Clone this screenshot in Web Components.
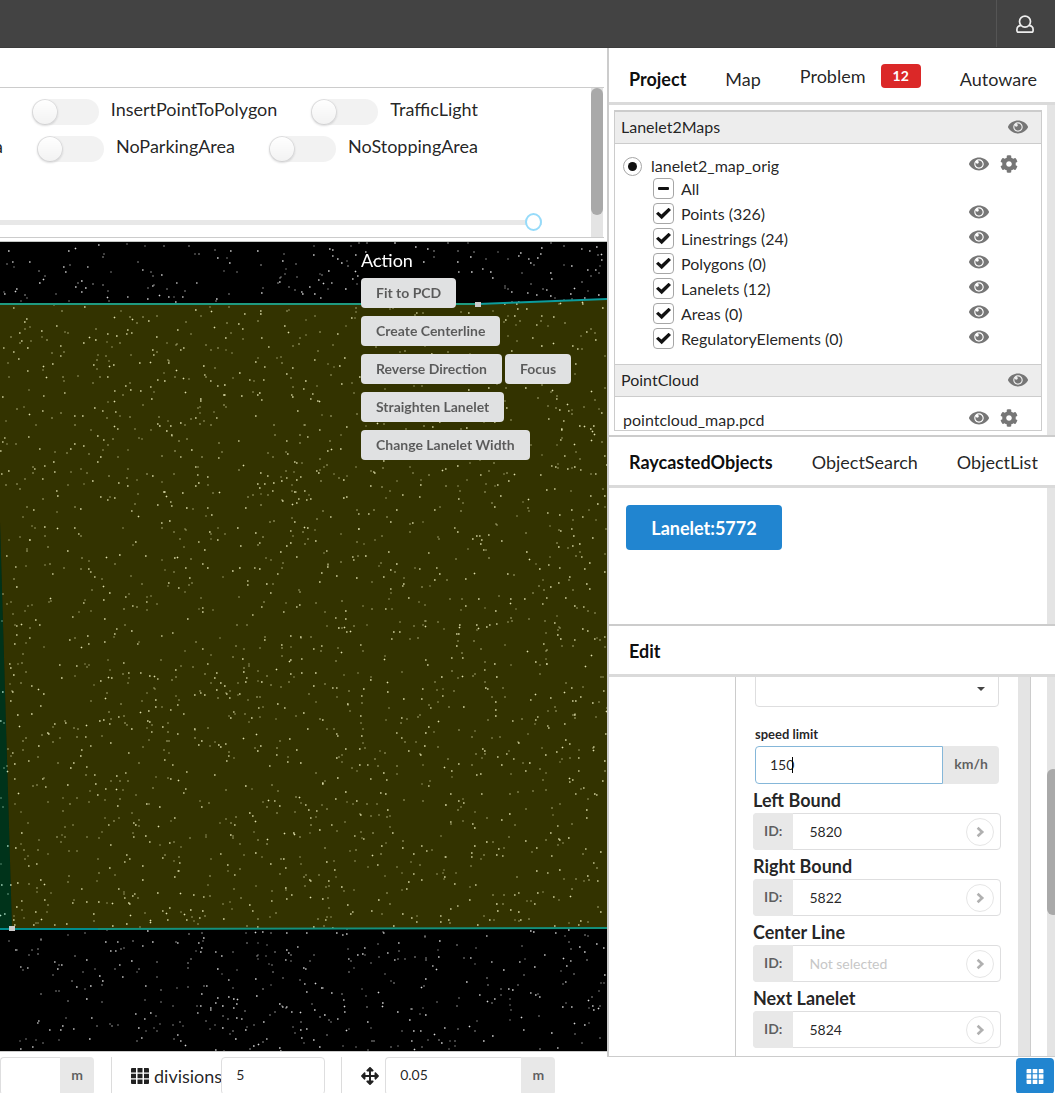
<!DOCTYPE html>
<html lang="en">
<head>
<meta charset="utf-8">
<title>Map Editor</title>
<style>
html,body{margin:0;height:100%}
body{font-family:Lato,"Liberation Sans",sans-serif;font-size:16px;color:rgba(0,0,0,.87);background:#fff;overflow:hidden}
</style>
</head>
<body>
<map-editor></map-editor>
<script>
const ICONS = {
  eye: ['0 0 576 512', '<path d="M569.354 231.631C512.97 135.949 407.81 72 288 72 168.14 72 63.004 135.994 6.646 231.631a47.999 47.999 0 0 0 0 48.739C63.031 376.051 168.19 440 288 440c119.86 0 224.996-63.994 281.354-159.631a47.997 47.997 0 0 0 0-48.738zM288 392c-75.162 0-136-60.827-136-136 0-75.162 60.826-136 136-136 75.162 0 136 60.826 136 136 0 75.162-60.826 136-136 136zm104-136c0 57.438-46.562 104-104 104s-104-46.562-104-104c0-17.708 4.431-34.379 12.236-48.973l-.001.032c0 23.651 19.173 42.823 42.824 42.823s42.824-19.173 42.824-42.823c0-23.651-19.173-42.824-42.824-42.824l-.032.001C253.621 156.431 270.292 152 288 152c57.438 0 104 46.562 104 104z"/>'],
  cog: ['0 0 512 512', '<path d="M444.788 291.1l42.616 24.599c4.867 2.809 7.126 8.618 5.459 13.985-11.07 35.642-29.97 67.842-54.689 94.586a12.016 12.016 0 0 1-14.832 2.254l-42.584-24.595a191.577 191.577 0 0 1-60.759 35.13v49.182a12.01 12.01 0 0 1-9.377 11.718c-34.956 7.85-72.499 8.256-109.219.007-5.49-1.233-9.403-6.096-9.403-11.723v-49.184a191.555 191.555 0 0 1-60.759-35.13l-42.584 24.595a12.016 12.016 0 0 1-14.832-2.254c-24.718-26.744-43.619-58.944-54.689-94.586-1.667-5.366.592-11.175 5.459-13.985L67.212 291.1a193.48 193.48 0 0 1 0-70.199l-42.616-24.599c-4.867-2.809-7.126-8.618-5.459-13.985 11.07-35.642 29.97-67.842 54.689-94.586a12.016 12.016 0 0 1 14.832-2.254l42.584 24.595a191.577 191.577 0 0 1 60.759-35.13V25.759a12.01 12.01 0 0 1 9.377-11.718c34.956-7.85 72.499-8.256 109.219-.007 5.49 1.233 9.403 6.096 9.403 11.723v49.184a191.555 191.555 0 0 1 60.759 35.13l42.584-24.595a12.016 12.016 0 0 1 14.832 2.254c24.718 26.744 43.619 58.944 54.689 94.586 1.667 5.366-.592 11.175-5.459 13.985L444.788 220.9a193.485 193.485 0 0 1 0 70.2zM336 256c0-44.112-35.888-80-80-80s-80 35.888-80 80 35.888 80 80 80 80-35.888 80-80z"/>'],
  user: ['0 0 18 18', '<g fill="none" stroke="currentColor" stroke-width="1.7"><circle cx="9" cy="6.6" r="5.5"/><path d="M5 10.4C2.400 10.800 .9 12.300 .9 14.600V15.400Q.9 17.100 2.600 17.100H15.400Q17.100 17.100 17.100 15.400V14.600C17.100 12.300 15.600 10.800 13 10.400"/></g>'],
  grid: ['0 0 18 16', '<path d="M1 0h4v4.600h-5v-3.600q0-1 1-1zM6.500 0h5v4.600h-5zM13 0h4q1 0 1 1v3.600h-5zM0 5.700h5v4.600h-5zM6.500 5.700h5v4.600h-5zM13 5.700h5v4.600h-5zM0 11.400h5v4.600h-4q-1 0-1-1zM6.500 11.400h5v4.600h-5zM13 11.400h5v3.600q0 1-1 1h-4z"/>'],
  move: ['0 0 512 512', '<path d="M352.201 425.775l-79.196 79.196c-9.373 9.373-24.568 9.373-33.941 0l-79.196-79.196c-15.119-15.119-4.411-40.971 16.971-40.97h51.162L228 284H127.196v51.162c0 21.382-25.851 32.09-40.971 16.971L7.029 272.937c-9.373-9.373-9.373-24.569 0-33.941L86.225 159.8c15.119-15.119 40.971-4.411 40.971 16.971V228H228V127.196h-51.23c-21.382 0-32.09-25.851-16.971-40.971l79.196-79.196c9.373-9.373 24.568-9.373 33.941 0l79.196 79.196c15.119 15.119 4.411 40.971-16.971 40.971h-51.162V228h100.804v-51.162c0-21.382 25.851-32.09 40.97-16.971l79.196 79.196c9.373 9.373 9.373 24.569 0 33.941L425.773 352.2c-15.119 15.119-40.971 4.411-40.97-16.971V284H284v100.804h51.23c21.382 0 32.09 25.851 16.971 40.971z"/>'],
  chevron: ['0 0 10 10', '<path d="M3 1.500L6.800 5L3 8.500" fill="none" stroke="currentColor" stroke-width="2.200"/>']
};

const RESET = `*{box-sizing:border-box}:host{display:block;box-sizing:border-box}
button,input,select{font:inherit;color:inherit;margin:0}
button{border:0;padding:0;background:none;cursor:pointer}`;

function define(name, css, html, setup) {
  const tpl = document.createElement('template');
  tpl.innerHTML = `<style>${RESET}${css}</style>${html}`;
  customElements.define(name, class extends HTMLElement {
    connectedCallback() {
      if (this.shadowRoot) return;
      const root = this.attachShadow({mode: 'open'});
      root.append(tpl.content.cloneNode(true));
      if (setup) setup(this, root);
    }
  });
}

define('ui-icon', ':host{display:inline-block;width:20px;height:18px;flex:none}svg{display:block;width:100%;height:100%;fill:currentColor}', '',
  (el, root) => {
    const [box, shape] = ICONS[el.getAttribute('name')];
    root.innerHTML += `<svg viewBox="${box}" aria-hidden="true">${shape}</svg>`;
  });

define('app-header', `
:host{height:48px;background:#434343;display:flex;justify-content:flex-end;border-bottom:1px solid #3c3c3c;color:#eee}
button{width:59px;padding-right:2px;border-left:1px solid #555;display:flex;align-items:center;justify-content:center}
ui-icon{width:18px}`,
`<button type="button" aria-label="Account"><ui-icon name="user"></ui-icon></button>`);

define('toggle-switch', `
:host{display:inline-flex;flex:none}
label{display:flex;gap:12px;align-items:flex-start;font-size:18px;line-height:22px;white-space:nowrap}
input{appearance:none;width:67px;height:26px;border-radius:13px;background:#f2f2f2;position:relative;margin-top:1px}
input::before{content:"";position:absolute;left:0;top:0;width:26px;height:26px;border-radius:50%;background:linear-gradient(transparent,rgba(0,0,0,.05)) #fff;box-shadow:0 1px 2px rgba(34,36,38,.15),inset 0 0 0 1px rgba(34,36,38,.15)}
input:checked::before{left:41px}`,
`<label><input type="checkbox"><span><slot></slot></span></label>`);

define('tool-bar', `
:host{padding:39px 3px 3px 0;border-bottom:1px solid #c4c8c4;display:block}
.box{display:flex;border:1px solid #ccc;border-width:1px 0;height:151px;padding-right:1px}
.body{flex:1;min-width:0;overflow:hidden;padding:10px 49px 0 0}
.row{display:flex;justify-content:flex-end;gap:34px;padding-right:64px;height:37px;font-size:18px;line-height:22px}
input{appearance:none;display:block;width:100%;height:18px;margin-top:41px;background:linear-gradient(#e8e8e8,#e8e8e8) center/100% 5px no-repeat}
input::-webkit-slider-thumb{appearance:none;width:17px;height:18px;border-radius:50%;border:2px solid #96dbfa;background:#fff}
.bar{width:12px;background:#e4e4e4;flex:none}
.bar i{display:block;height:127px;border-radius:6px;background:#a9a9a9}`,
`<div class="box"><div class="body">
<div class="row"><toggle-switch>InsertPointToPolygon</toggle-switch><toggle-switch>TrafficLight</toggle-switch></div>
<div class="row"><span>a</span><toggle-switch>NoParkingArea</toggle-switch><toggle-switch>NoStoppingArea</toggle-switch></div>
<input type="range" value="100" aria-label="Scale">
</div><div class="bar"><i></i></div></div>`);

define('action-button', `
:host{display:inline-block}
button{height:30px;padding:0 15px;border-radius:4px;background:#e0e1e2;color:rgba(0,0,0,.6);font-size:14px;line-height:30px;font-weight:700;white-space:nowrap;display:block}`,
`<button type="button"><slot></slot></button>`);

define('map-view', `
:host{position:relative;overflow:hidden;background:#000;flex:1;min-height:0}
canvas{position:absolute;inset:0;width:100%;height:100%}
.actions{position:absolute;right:0;top:8px;width:246px;display:flex;flex-direction:column;gap:8px}
.title{color:#fff;font-size:18px;line-height:20px}
.line{display:flex;gap:3px}`,
`<canvas></canvas><div class="actions"><div class="title">Action</div>
<div class="line"><action-button>Fit to PCD</action-button></div>
<div class="line"><action-button>Create Centerline</action-button></div>
<div class="line"><action-button>Reverse Direction</action-button><action-button>Focus</action-button></div>
<div class="line"><action-button>Straighten Lanelet</action-button></div>
<div class="line"><action-button>Change Lanelet Width</action-button></div></div>`,
(el, root) => {
  const c = root.querySelector('canvas');
  const draw = () => {
    const w = c.width = el.clientWidth, h = c.height = el.clientHeight, g = c.getContext('2d');
    let s = 90210;
    const rnd = () => (s = (s * 1664525 + 1013904223) >>> 0) / 4294967296;
    g.fillStyle = '#000';
    g.fillRect(0, 0, w, h);
    for (let i = 0, n = w * h * 0.0055; i < n; i++) {
      const x = Math.floor(rnd() * w), y = Math.floor(rnd() * h), a = rnd();
      if (a > .94) {
        g.fillStyle = 'rgba(255,255,255,.75)';
        g.fillRect(x, y, 1, 1);
        g.fillStyle = 'rgba(255,255,255,.25)';
        g.fillRect(x - 1, y, 3, 1);
        g.fillRect(x, y - 1, 1, 3);
      } else {
        g.fillStyle = `rgba(255,255,255,${(.2 + a * .18).toFixed(2)})`;
        g.fillRect(x, y, 2, 2);
        if (a > .5) g.fillRect(x, y, 1, 2);
      }
    }
    const shape = (color, pts) => {
      g.fillStyle = color;
      g.beginPath();
      pts.forEach(p => g.lineTo(p[0], p[1]));
      g.fill();
    };
    shape('rgba(255,255,0,.2)', [[0, 62], [478, 62], [w, 57], [w, 686], [12, 687], [0, 280]]);
    shape('rgba(0,255,128,.2)', [[0, 280], [12, 687], [0, 687]]);
    const line = (color, pts) => {
      g.strokeStyle = color;
      g.lineWidth = 2;
      g.beginPath();
      pts.forEach(p => g.lineTo(p[0], p[1]));
      g.stroke();
    };
    line('#1f9a80', [[0, 62], [478, 62]]);
    line('#0c9c9c', [[478, 62], [w, 57]]);
    line('#008c8c', [[0, 687], [98, 687]]);
    line('#14907c', [[98, 687], [w, 686]]);
    g.fillStyle = '#ccc';
    g.fillRect(475, 60, 6, 5);
    g.fillRect(9, 684, 6, 5);
  };
  draw();
  new ResizeObserver(draw).observe(el);
});

define('tab-bar', `
:host{display:flex;align-items:flex-end;gap:39px;height:51px;padding:0 16px 14px 20px;border-bottom:3px solid #dadada;white-space:nowrap;flex:none}
:host([tall]){height:57px;padding-bottom:14px}`,
`<slot></slot>`, el => el.setAttribute('role', 'tablist'));

define('count-badge', `
:host{display:inline-block;background:#db2828;color:#fff;font-weight:700;font-size:14px;line-height:24px;padding:0 12px;border-radius:4px}`,
`<slot></slot>`);

define('icon-button', `
:host{display:inline-flex}
button{display:flex;color:#767676}
:host([name=cog]) ui-icon{width:18px}`,
`<button type="button"></button>`, (el, root) => {
  const n = el.getAttribute('name'), b = root.querySelector('button');
  b.setAttribute('aria-label', n === 'cog' ? 'Settings' : 'Toggle visibility');
  b.innerHTML = `<ui-icon name="${n}"></ui-icon>`;
});

define('section-head', `
:host{display:flex;justify-content:space-between;align-items:center;height:33px;padding:0 13px 2px 6px;background:#ededed;border:1px solid #ccc;border-width:1px 0;font-size:16px;line-height:20px}`,
`<span><slot></slot></span><icon-button name="eye"></icon-button>`);

define('layer-row', `
:host{display:flex;align-items:center;height:25px;padding:0 52px 0 38px;font-size:16px;line-height:20px}
:host([root]){padding:0 23px 0 8px;height:20px}
label{display:flex;align-items:center;gap:7px;flex:1;white-space:nowrap}
:host([root]) label{gap:9px}
input{appearance:none;width:21px;height:21px;border:1px solid #a6a6a6;border-radius:4px;background:#fff;display:grid;place-items:center;flex:none}
input[type=radio]{width:19px;height:19px;border-radius:50%}
input[type=radio]::before{content:"";width:9px;height:9px;border-radius:50%;background:#111}
input[type=checkbox]::before{content:"";width:15px;height:12px;background:#111;clip-path:polygon(0 52%,15% 35%,36% 58%,84% 2%,100% 20%,38% 98%)}
:host([partial]) input::before{width:11px;height:3px;clip-path:none;border-radius:1px}
.tools{display:flex;gap:11px;padding-bottom:4px}`,
`<label><input type="checkbox" checked><span><slot></slot></span></label><div class="tools"></div>`,
(el, root) => {
  if (el.hasAttribute('root')) root.querySelector('input').type = 'radio';
  root.querySelector('.tools').innerHTML = (el.hasAttribute('partial') ? '' : '<icon-button name="eye"></icon-button>') +
    (el.hasAttribute('root') ? '<icon-button name="cog"></icon-button>' : '');
});

define('scroll-pane', `
:host{display:flex;min-height:0;overflow:hidden}
.body{flex:1;min-width:0;overflow:hidden}
.bar{width:8px;background:#e4e4e4;overflow:hidden;flex:none}
.bar i{display:none;width:12px;height:146px;margin-top:92px;border-radius:6px;background:#a9a9a9}
:host([thumb]) .bar i{display:block}`,
`<div class="body"><slot></slot></div><div class="bar"><i></i></div>`);

define('project-tree', `
:host{margin:5px 5px 4px 5px;height:321px;border:1px solid #ccc;overflow:hidden}
.group{padding:12px 0 13px}
.file{display:flex;align-items:center;justify-content:space-between;padding:12px 23px 0 8px;font-size:16px;line-height:22px}
.tools{display:flex;gap:11px;padding-bottom:4px}`,
`<section-head>Lanelet2Maps</section-head>
<div class="group"><layer-row root>lanelet2_map_orig</layer-row>
<layer-row partial>All</layer-row><layer-row>Points (326)</layer-row><layer-row>Linestrings (24)</layer-row><layer-row>Polygons (0)</layer-row><layer-row>Lanelets (12)</layer-row><layer-row>Areas (0)</layer-row><layer-row>RegulatoryElements (0)</layer-row></div>
<section-head>PointCloud</section-head>
<div class="file"><span>pointcloud_map.pcd</span><div class="tools"><icon-button name="eye"></icon-button><icon-button name="cog"></icon-button></div></div>`);

define('unit-input', `
:host{display:flex;height:38px;font-size:14px;line-height:20px;flex:none}
.wrap{position:relative;flex:1;min-width:0;display:flex}
input{width:100%;border:1px solid #dededf;border-radius:4px;padding:0 14px 2px;outline:0;background:#fff}
.unit{background:#e8e8e8;color:rgba(0,0,0,.6);font-weight:700;padding:0 11px 2px;border-radius:0 4px 4px 0;display:none;align-items:center}
:host([unit]) input{border-radius:4px 0 0 4px;border-right:0}
:host([unit]) .unit{display:flex}
:host([active]) input{border:1px solid #85b7d9;padding-bottom:0}
.caret{display:none;position:absolute;left:37px;top:11px;width:1px;height:16px;background:#000}
:host([active]) .caret{display:block}`,
`<div class="wrap"><input type="text" id="v"><span class="caret"></span></div><span class="unit"></span>`,
(el, root) => {
  const i = root.querySelector('input');
  i.value = el.getAttribute('value') || '';
  i.setAttribute('aria-label', el.getAttribute('label'));
  root.querySelector('.unit').textContent = el.getAttribute('unit') || '';
});

define('bound-field', `
:host{padding:0 17px}
label{display:block;font-size:18px;font-weight:700;line-height:29px;height:29px;padding-top:2px}
.f{display:flex;height:37px;border:1px solid #dededf;border-radius:4px;align-items:center;padding-right:6px;font-size:14px}
.id{background:#e8e8e8;color:rgba(0,0,0,.6);font-weight:700;align-self:stretch;margin:-1px 0 -1px -1px;padding:0 11px 2px;border-radius:4px 0 0 4px;display:flex;align-items:center}
input{flex:1;min-width:0;border:0;outline:0;padding:0 16px;background:none;line-height:20px}
input::placeholder{color:#c7c7c7;opacity:1}
button{width:28px;height:28px;border-radius:50%;border:1px solid #e6e6e6;display:flex;align-items:center;justify-content:center;color:#b0b0b0;flex:none}
ui-icon{width:12px;height:12px}`,
`<label for="v"></label><div class="f"><span class="id">ID:</span><input id="v" type="text" placeholder="Not selected"><button type="button" aria-label="Open"><ui-icon name="chevron"></ui-icon></button></div>`,
(el, root) => {
  root.querySelector('label').textContent = el.getAttribute('label');
  root.querySelector('input').value = el.getAttribute('value') || '';
});

define('edit-form', `
:host{display:flex;height:100%}
.form{flex:1;min-width:0;margin-left:126px;border-left:1px solid #ccc;overflow:hidden}
.attrs{padding:0 19px;margin-top:-8px}
.sel{position:relative}
select{appearance:none;display:block;width:100%;height:38px;border:1px solid #dededf;border-radius:4px;background:#fff}
.sel::after{content:"";position:absolute;right:14px;top:18px;border:4px solid transparent;border-top-color:#444;border-bottom:0}
.cap{display:block;font-size:13px;font-weight:700;line-height:16px;margin:19px 0 4px}
.track{width:13px;background:#e4e4e4;border-right:1px solid #ccc;flex:none;margin-right:16px}`,
`<div class="form"><div class="attrs"><div class="sel"><select aria-label="Attribute"><option></option></select></div>
<span class="cap">speed limit</span><unit-input label="speed limit" value="150" unit="km/h" active></unit-input></div>
<bound-field label="Left Bound" value="5820"></bound-field>
<bound-field label="Right Bound" value="5822"></bound-field>
<bound-field label="Center Line"></bound-field>
<bound-field label="Next Lanelet" value="5824"></bound-field></div><div class="track"></div>`);

define('side-panel', `
:host{display:flex;flex-direction:column;width:448px;flex:none;border-left:2px solid #ccc;border-bottom:1px solid #ccc;min-height:0}
scroll-pane{border-bottom:2px solid #ccc;flex:none}
scroll-pane.proj{height:332px}
scroll-pane.ray{height:138px}
scroll-pane.edit{flex:1;border:0}
[role=tab]{display:flex;align-items:center;gap:15px;font-size:18px;line-height:18px}
[role=tab][aria-selected=true]{font-weight:700;color:rgba(0,0,0,.95)}
.obj{margin:17px;width:156px;height:45px;border-radius:4px;background:#2185d0;color:#fff;font-weight:700;font-size:18px;display:block}`,
`<tab-bar tall><button role="tab" aria-selected="true">Project</button><button role="tab">Map</button><button role="tab">Problem <count-badge>12</count-badge></button><button role="tab">Autoware</button></tab-bar>
<scroll-pane class="proj"><project-tree></project-tree></scroll-pane>
<tab-bar><button role="tab" aria-selected="true">RaycastedObjects</button><button role="tab">ObjectSearch</button><button role="tab">ObjectList</button></tab-bar>
<scroll-pane class="ray"><button type="button" class="obj">Lanelet:5772</button></scroll-pane>
<tab-bar><button role="tab" aria-selected="true">Edit</button></tab-bar>
<scroll-pane class="edit" thumb><edit-form></edit-form></scroll-pane>`);

define('status-bar', `
:host{display:flex;height:36px;overflow:hidden;align-items:flex-start;flex:none}
hr{width:1px;height:38px;border:0;margin:0 19px 0 17px;background:#dcdcdc;flex:none}
.a{width:94px}.b{width:104px;margin:0 -1px}.c{width:170px}
.cap{display:flex;align-items:center;gap:5px;height:38px;font-size:18px}
.cap ui-icon{height:16px;width:18px}
.cap.mv{padding-right:6px}
.cap.mv ui-icon{height:18px}
.go{width:38px;height:36px;margin:1px 1px 0 auto;border-radius:4px;background:#2185d0;color:#fff;display:flex;align-items:center;justify-content:center}
.go ui-icon{width:18px;height:15px}`,
`<unit-input class="a" label="size" unit="m"></unit-input><hr>
<span class="cap"><ui-icon name="grid"></ui-icon>divisions</span><unit-input class="b" label="divisions" value="5"></unit-input><hr>
<span class="cap mv"><ui-icon name="move"></ui-icon></span><unit-input class="c" label="step" value="0.05" unit="m"></unit-input>
<button type="button" class="go" aria-label="Grid"><ui-icon name="grid"></ui-icon></button>`);

define('map-editor', `
:host{display:flex;flex-direction:column;height:100vh}
main{flex:1;display:flex;min-height:0}
.left{flex:1;min-width:0;display:flex;flex-direction:column;padding-bottom:5px}
map-view{border-bottom:1px solid #ccc}`,
`<app-header></app-header><main><div class="left"><tool-bar></tool-bar><map-view></map-view></div><side-panel></side-panel></main><status-bar></status-bar>`);
</script>
</body>
</html>
